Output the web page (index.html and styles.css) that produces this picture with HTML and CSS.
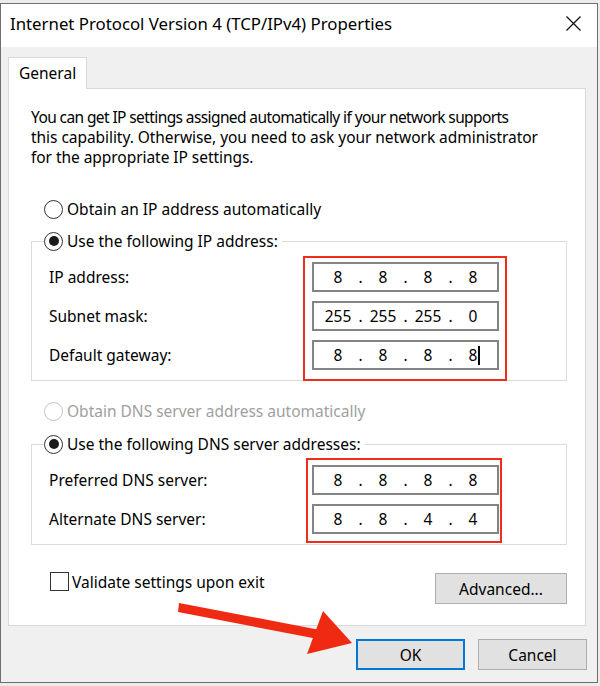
FILE: index.html
```html
<!DOCTYPE html>
<html lang="en">

<head>
  <meta charset="UTF-8">
  <meta name="viewport" content="width=device-width, initial-scale=1.0">
  <title>Internet Protocol Version 4 (TCP/IPv4) Properties</title>
  <link rel="stylesheet" href="styles.css">
</head>

<body>
  <div class="dialog">
    <div class="titlebar">
      <span class="title">Internet Protocol Version 4 (TCP/IPv4) Properties</span>
      <svg class="close" width="15" height="15" viewBox="0 0 15 15">
        <path d="M0.5 0.5L14.5 14.5M14.5 0.5L0.5 14.5" />
      </svg>
    </div>

    <div class="dialog-body">
      <div class="tabs">
        <div class="tab">General</div>
      </div>

      <div class="panel">
        <p class="intro"><span class="tight">You can get IP settings assigned automatically if your network supports</span><br>
          this capability. Otherwise, you need to ask your network administrator<br>
          for the appropriate IP settings.</p>

        <div class="option option-first"><span class="radio"></span>Obtain an IP address automatically</div>

        <div class="group group-ip">
          <div class="option legend"><span class="radio checked"></span>Use the following IP address:</div>
          <div class="group-body body-ip">
            <div class="labels labels-ip">
              <div class="field-label">IP address:</div>
              <div class="field-label">Subnet mask:</div>
              <div class="field-label">Default gateway:</div>
            </div>
            <div class="highlight highlight-ip">
              <div class="ip-field">
                <span class="octet">8</span><span class="dot">.</span><span class="octet">8</span><span
                  class="dot">.</span><span class="octet">8</span><span class="dot">.</span><span class="octet">8</span>
              </div>
              <div class="ip-field">
                <span class="octet">255</span><span class="dot">.</span><span class="octet">255</span><span
                  class="dot">.</span><span class="octet">255</span><span class="dot">.</span><span
                  class="octet">0</span>
              </div>
              <div class="ip-field">
                <span class="octet">8</span><span class="dot">.</span><span class="octet">8</span><span
                  class="dot">.</span><span class="octet">8</span><span class="dot">.</span><span
                  class="octet">8<i class="caret"></i></span>
              </div>
            </div>
          </div>
        </div>

        <div class="option disabled option-dns"><span class="radio"></span>Obtain DNS server address automatically</div>

        <div class="group group-dns">
          <div class="option legend"><span class="radio checked"></span>Use the following DNS server addresses:</div>
          <div class="group-body body-dns">
            <div class="labels labels-dns">
              <div class="field-label">Preferred DNS server:</div>
              <div class="field-label">Alternate DNS server:</div>
            </div>
            <div class="highlight highlight-dns">
              <div class="ip-field">
                <span class="octet">8</span><span class="dot">.</span><span class="octet">8</span><span
                  class="dot">.</span><span class="octet">8</span><span class="dot">.</span><span class="octet">8</span>
              </div>
              <div class="ip-field">
                <span class="octet">8</span><span class="dot">.</span><span class="octet">8</span><span
                  class="dot">.</span><span class="octet">4</span><span class="dot">.</span><span class="octet">4</span>
              </div>
            </div>
          </div>
        </div>

        <div class="bottom-row">
          <div class="check-option"><span class="checkbox"></span>Validate settings upon exit</div>
          <button class="btn btn-advanced">Advanced...</button>
        </div>
      </div>

      <div class="footer">
        <button class="btn btn-default">OK</button>
        <button class="btn">Cancel</button>
      </div>
    </div>
  </div>

  <!-- annotation arrow pointing at OK -->
  <svg class="arrow" width="600" height="686" viewBox="0 0 600 686">
    <path d="M179 603L320 630L318 639L178 612Z" />
    <path d="M323 611L352 643L307 654Z" />
  </svg>
</body>

</html>
```

FILE: styles.css
```css
* {
  margin: 0;
  padding: 0;
  box-sizing: border-box;
}

body {
  position: relative;
  height: 686px;
  overflow: hidden;
  background: #ececec;
  font-family: "Noto Sans", "Open Sans", sans-serif;
  font-size: 15.5px;
  color: #000;
}

.dialog {
  width: 598px;
  margin-top: 3px;
  border: 1px solid #6f6f6f;
  background: #f0f0f0;
}

.titlebar {
  height: 43px;
  display: flex;
  align-items: center;
  justify-content: space-between;
  padding: 0 16px 4px 9px;
  background: #fff;
}

.title {
  font-size: 16.8px;
}

.close path {
  stroke: #111;
  stroke-width: 1.3;
  fill: none;
}

.dialog-body {
  padding: 10px 11px 12px 7px;
}

.tabs {
  display: flex;
}

.tab {
  position: relative;
  z-index: 1;
  width: 79px;
  height: 32px;
  margin-bottom: -1px;
  padding: 4px 0 0 10px;
  border: 1px solid #d9d9d9;
  border-bottom: none;
  background: #fff;
}

.panel {
  border: 1px solid #d9d9d9;
  background: #fff;
  padding: 18px 18px 21px 22px;
}

.intro {
  line-height: 20px;
  letter-spacing: -0.05px;
}

.intro .tight {
  letter-spacing: -0.6px;
}

.option {
  display: flex;
  align-items: center;
  gap: 4px;
  height: 20px;
  margin-left: 13px;
  white-space: nowrap;
}

.option-first {
  margin-top: 32px;
}

.radio {
  display: flex;
  align-items: center;
  justify-content: center;
  width: 19px;
  height: 19px;
  border: 1.5px solid #333;
  border-radius: 50%;
  background: #fff;
}

.radio.checked::after {
  content: "";
  width: 10px;
  height: 10px;
  border-radius: 50%;
  background: #1a1a1a;
}

.option.disabled {
  color: #a0a0a0;
}

.option.disabled .radio {
  border-color: #c4c4c4;
}

.group {
  border: 1px solid #dcdcdc;
}

.group-ip {
  margin-top: 22px;
}

.group-dns {
  margin-top: 23px;
}

.option.legend {
  width: fit-content;
  margin: -11px 0 0 12px;
  padding-right: 4px;
  background: #fff;
}

.option-dns {
  margin-top: 20px;
}

.group-body {
  display: flex;
  padding-left: 17px;
}

.body-ip {
  margin: 5px 0 -1px;
}

.body-dns {
  margin: 4px 0 1px;
}

.labels {
  flex: none;
  display: flex;
  flex-direction: column;
  gap: 9px;
}

.labels-ip {
  width: 254px;
  padding-top: 6px;
}

.labels-dns {
  width: 257px;
  padding-top: 7px;
}

.field-label {
  height: 30px;
  display: flex;
  align-items: center;
}

.highlight {
  display: flex;
  flex-direction: column;
  gap: 9px;
  border: 2px solid #ee2d1c;
}

.highlight-ip {
  padding: 4px 6px 9px 7px;
}

.highlight-dns {
  padding: 5px 1px 7px 4px;
}

.ip-field {
  display: flex;
  justify-content: center;
  align-items: center;
  width: 187px;
  height: 30px;
  border: 2px solid #848484;
  background: #fff;
}

.octet {
  width: 30px;
  text-align: center;
}

.dot {
  width: 15px;
  text-align: center;
}

.caret {
  display: inline-block;
  width: 1.5px;
  height: 19px;
  margin: 0 -2.5px 0 1px;
  vertical-align: -4px;
  background: #000;
}

.bottom-row {
  display: flex;
  justify-content: space-between;
  align-items: flex-start;
  margin-top: 27px;
}

.check-option {
  display: flex;
  align-items: center;
  gap: 3px;
  height: 19px;
  margin-left: 19px;
}

.checkbox {
  width: 19px;
  height: 19px;
  border: 1.5px solid #333;
  background: #fff;
}

.btn {
  width: 109px;
  height: 31px;
  border: 1px solid #adadad;
  background: #e1e1e1;
  font: inherit;
  color: #000;
}

.btn-advanced {
  width: 132px;
  margin-top: 1px;
}

.btn-default {
  border: 2px solid #0078d7;
}

.footer {
  display: flex;
  justify-content: flex-end;
  gap: 13px;
  margin: 13px -1px 0 0;
}

.arrow {
  position: absolute;
  left: 0;
  top: 0;
  pointer-events: none;
}

.arrow path {
  fill: #f02a12;
}
```
